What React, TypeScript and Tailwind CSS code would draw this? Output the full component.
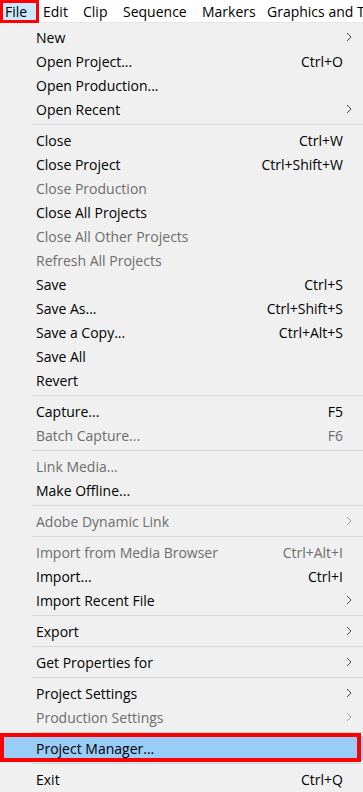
import React from "react";

type Item =
  | { sep: true }
  | { label: string; shortcut?: string; sub?: boolean; disabled?: boolean; hl?: boolean };

const items: Item[] = [
  { label: "New", sub: true },
  { label: "Open Project...", shortcut: "Ctrl+O" },
  { label: "Open Production..." },
  { label: "Open Recent", sub: true },
  { sep: true },
  { label: "Close", shortcut: "Ctrl+W" },
  { label: "Close Project", shortcut: "Ctrl+Shift+W" },
  { label: "Close Production", disabled: true },
  { label: "Close All Projects" },
  { label: "Close All Other Projects", disabled: true },
  { label: "Refresh All Projects", disabled: true },
  { label: "Save", shortcut: "Ctrl+S" },
  { label: "Save As...", shortcut: "Ctrl+Shift+S" },
  { label: "Save a Copy...", shortcut: "Ctrl+Alt+S" },
  { label: "Save All" },
  { label: "Revert" },
  { sep: true },
  { label: "Capture...", shortcut: "F5" },
  { label: "Batch Capture...", shortcut: "F6", disabled: true },
  { sep: true },
  { label: "Link Media...", disabled: true },
  { label: "Make Offline..." },
  { sep: true },
  { label: "Adobe Dynamic Link", sub: true, disabled: true },
  { sep: true },
  { label: "Import from Media Browser", shortcut: "Ctrl+Alt+I", disabled: true },
  { label: "Import...", shortcut: "Ctrl+I" },
  { label: "Import Recent File", sub: true },
  { sep: true },
  { label: "Export", sub: true },
  { sep: true },
  { label: "Get Properties for", sub: true },
  { sep: true },
  { label: "Project Settings", sub: true },
  { label: "Production Settings", sub: true, disabled: true },
  { sep: true },
  { label: "Project Manager...", hl: true },
  { sep: true },
  { label: "Exit", shortcut: "Ctrl+Q" },
];

function Chevron({ disabled }: { disabled?: boolean }) {
  return (
    <svg width="6" height="10" viewBox="0 0 6 10" className="shrink-0">
      <path d="M1 1 L5 5 L1 9" fill="none" stroke={disabled ? "#a0a0a0" : "#444"} strokeWidth="1" />
    </svg>
  );
}

export default function App() {
  const font = { fontFamily: '"Open Sans", "Noto Sans", sans-serif' };
  return (
    <div className="relative w-[363px] h-[792px] overflow-hidden bg-[#f0f0f0] text-[14px] text-black" style={font}>
      {/* menubar */}
      <div className="flex h-[23px] items-center bg-white border-b border-[#e5e5e5] whitespace-nowrap overflow-hidden">
        <div className="h-[23px] w-[39px] shrink-0 flex items-center pl-[5px] bg-[#cce8ff]">File</div>
        <div className="pl-[4px] w-[44px] shrink-0">Edit</div>
        <div className="w-[40px] shrink-0">Clip</div>
        <div className="w-[79px] shrink-0">Sequence</div>
        <div className="w-[65px] shrink-0">Markers</div>
        <div className="shrink-0">Graphics and Titles</div>
      </div>
      {/* menu */}
      <div className="flex flex-col pt-[2px]">
        {items.map((it, i) =>
          "sep" in it ? (
            <div key={i} className="h-[7px] flex items-center pl-[32px]">
              <div className="h-px w-full bg-[#d7d7d7]" />
            </div>
          ) : (
            <div
              key={i}
              className={
                "h-[24px] flex items-center pl-[36px] pr-[11px] whitespace-nowrap " +
                (it.hl ? "bg-[#99ccf6] " : "") +
                (it.disabled ? "text-[#6d6d6d]" : "text-black")
              }
            >
              <span className="flex-1">{it.label}</span>
              {it.shortcut && <span className="pr-[9px]">{it.shortcut}</span>}
              {it.sub && <Chevron disabled={it.disabled} />}
            </div>
          )
        )}
      </div>
      {/* annotation boxes */}
      <div className="absolute left-0 top-0 w-[39px] h-[23px] border-[3px] border-[#ff0000] pointer-events-none" />
      <div className="absolute left-0 top-[733px] w-[361px] h-[29px] border-[4px] border-[#ff0000] pointer-events-none" />
    </div>
  );
}
